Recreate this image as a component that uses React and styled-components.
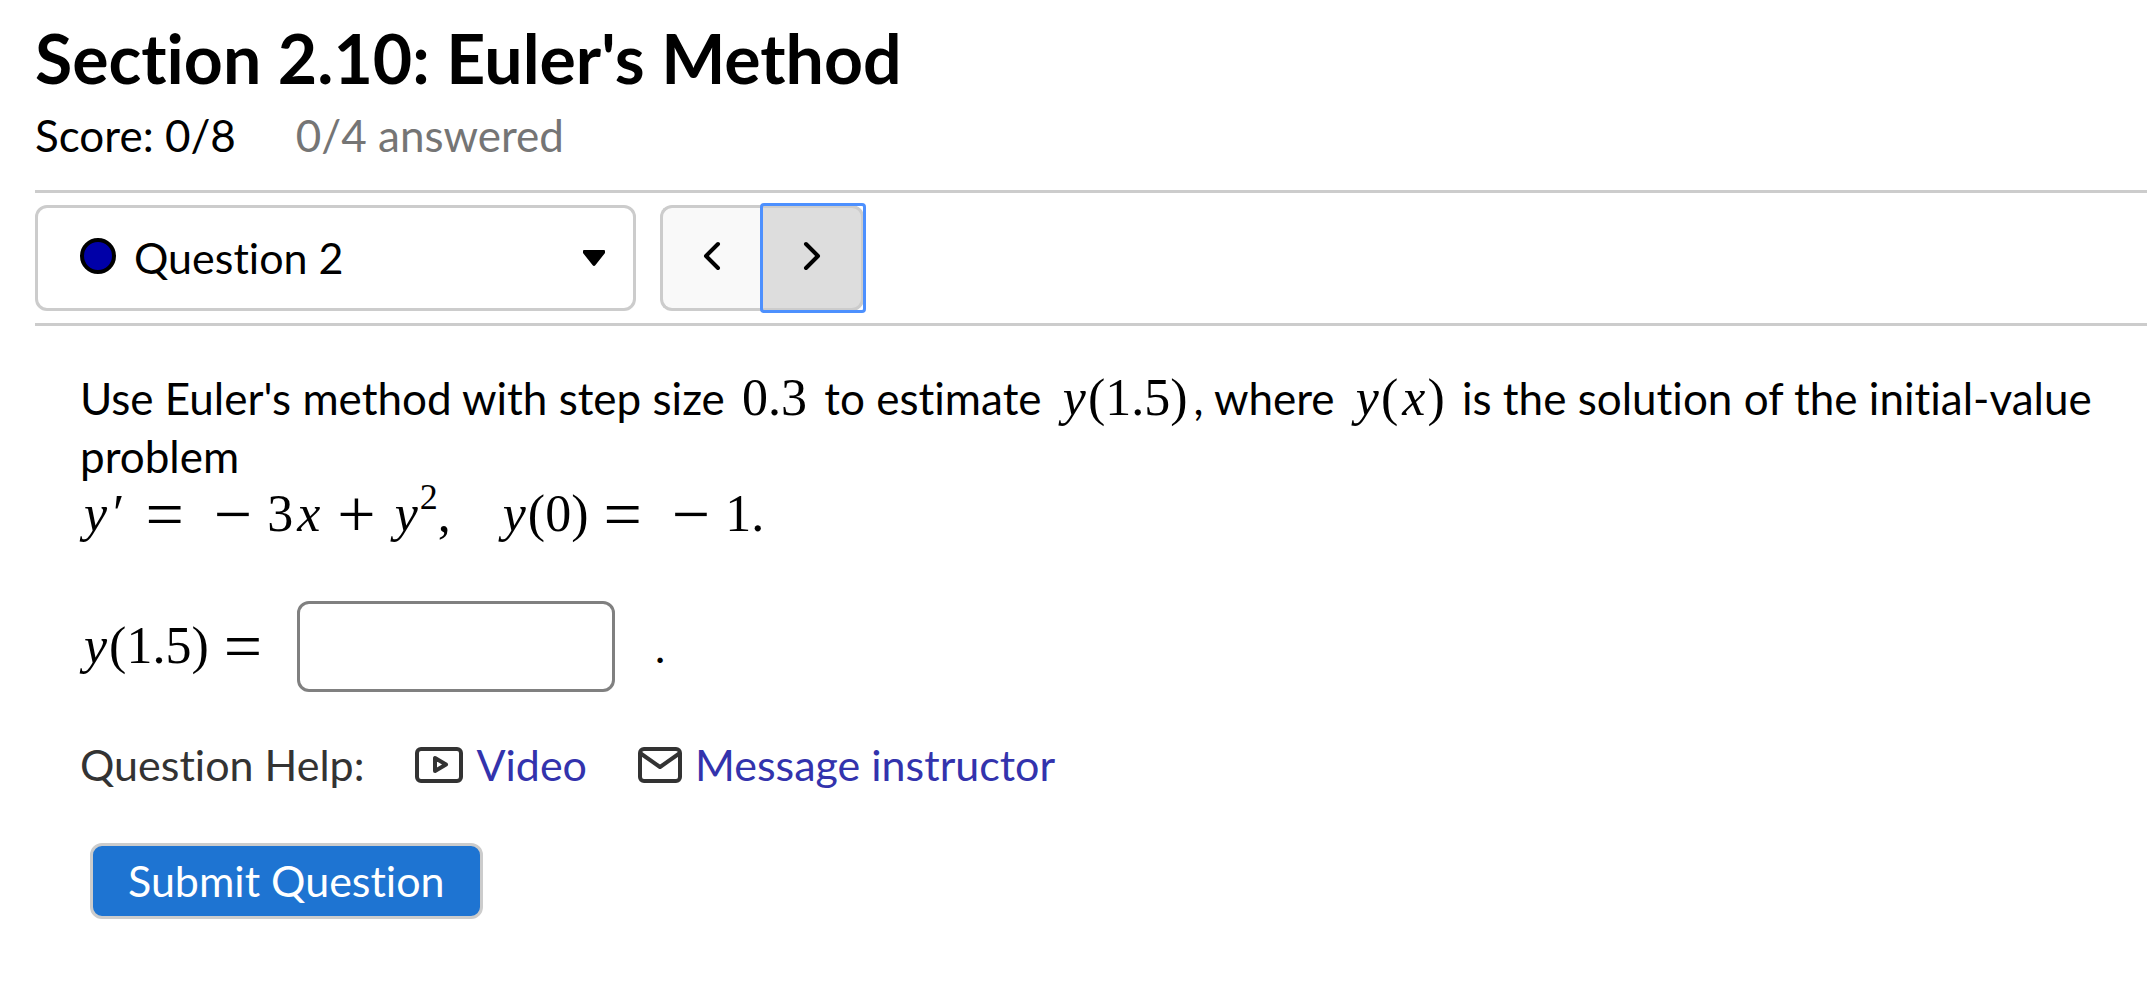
import React, { useState } from 'react';
import styled, { createGlobalStyle } from 'styled-components';

const GlobalStyle = createGlobalStyle`
  * {
    box-sizing: border-box;
  }

  body {
    margin: 0;
    background: #fff;
    color: #000;
    font-family: "Trebuchet MS", Lato, sans-serif;
    font-size: 43px;
    line-height: 58px;
    font-variant-ligatures: none;
  }
`;

const Page = styled.main`
  padding: 22px 0 60px 35px;
`;

const Title = styled.h1`
  margin: 0;
  font-size: 68px;
  line-height: 72px;
  font-weight: 700;
`;

const ScoreLine = styled.div`
  display: flex;
  gap: 60px;
  padding: 12px 0 26px;
  font-size: 44px;
`;

const Answered = styled.span`
  color: #757575;
`;

const Toolbar = styled.nav`
  display: flex;
  gap: 24px;
  padding: 12px 0;
  border-top: 3px solid #ccc;
  border-bottom: 3px solid #ccc;
`;

const Picker = styled.label`
  display: flex;
  align-items: center;
  gap: 18px;
  width: 601px;
  height: 106px;
  padding: 0 28px 0 42px;
  border: 3px solid #ccc;
  border-radius: 12px;
`;

const Dot = styled.span`
  width: 36px;
  height: 36px;
  margin-bottom: 4px;
  border: 4px solid #000;
  border-radius: 50%;
  background: #0000a8;
`;

const QuestionSelect = styled.select`
  flex: 1;
  appearance: none;
  padding: 0;
  border: 0;
  background: none;
  color: inherit;
  font: inherit;
`;

const Pager = styled.div`
  display: flex;
`;

const PagerButton = styled.button`
  position: relative;
  display: flex;
  align-items: center;
  justify-content: center;
  width: ${props => (props.$active ? '104px' : '100px')};
  height: 106px;
  padding: 0 0 4px;
  border: 3px solid #ccc;
  border-right-width: ${props => (props.$active ? '3px' : '0')};
  border-radius: ${props => (props.$active ? '0 12px 12px 0' : '12px 0 0 12px')};
  background: ${props => (props.$active ? '#ddd' : '#f9f9f9')};
  color: #000;
  outline: none;

  /* focus ring, squarer than the button under it */
  &::after {
    content: "";
    display: ${props => (props.$active ? 'block' : 'none')};
    position: absolute;
    inset: -5px -5px -5px -3px;
    border: 3px solid #4d90fe;
    border-radius: 4px;
  }
`;

const Question = styled.section`
  padding: 43px 40px 0 45px;
`;

const Text = styled.p`
  margin: 0;
  font-size: 44px;
`;

const MathText = styled.span`
  display: inline-flex;
  align-items: center;
  height: 58px;
  font-family: "Liberation Serif", serif;
  font-size: 52px;
  vertical-align: baseline;
  white-space: nowrap;
`;

const InlineMath = styled(MathText)`
  margin: 0 6px;
`;

const Equation = styled.div`
  display: flex;
`;

const Var = styled.i`
  margin: 0 2px 0 4px;
`;

const Prime = styled.span`
  margin: 0 6px 0 4px;
`;

const Operator = styled.span`
  margin: 0 15px;
  font-size: 68px;
`;

const Power = styled.sup`
  align-self: flex-start;
  font-size: 36px;
  line-height: 24px;
`;

const Second = styled.span`
  margin-left: 48px;
`;

const AnswerRow = styled.div`
  display: flex;
  align-items: center;
  gap: 20px;
  margin-top: 58px;
`;

const AnswerInput = styled.input`
  width: 318px;
  height: 91px;
  padding: 0 16px;
  border: 3px solid #808080;
  border-radius: 12px;
  background: #fff;
  font: inherit;
`;

const Period = styled.span`
  margin-left: 20px;
`;

const Help = styled.div`
  display: flex;
  flex-wrap: wrap;
  align-items: center;
  gap: 51px;
  margin-top: 44px;
  color: #333;
`;

const HelpItem = styled.span`
  display: flex;
  align-items: center;
  gap: 13px;
`;

const HelpLink = styled.a`
  color: #3333ad;
  text-decoration: none;
`;

const SubmitButton = styled.button`
  display: block;
  margin: 49px 0 0 10px;
  padding: 6px 35px;
  border: 3px solid #ccc;
  border-radius: 12px;
  background: #1e74d2;
  color: #fff;
  font: inherit;
`;

const CaretIcon = () => (
  <svg width="22" height="16" viewBox="0 0 22 16" aria-hidden="true">
    <path d="M1 0h20q1 0 1 1v2l-9.500 12q-1.500 2-3 0L0 3V1q0-1 1-1z" />
  </svg>
);

const ChevronIcon = ({ next }) => (
  <svg width="18" height="30" viewBox="0 0 18 30" fill="none" stroke="currentColor" strokeWidth="4" strokeLinecap="round" strokeLinejoin="round" aria-hidden="true">
    <path d={next ? 'M3 3l12 12L3 27' : 'M15 3L3 15l12 12'} />
  </svg>
);

const VideoIcon = () => (
  <svg width="48" height="36" viewBox="0 0 48 36" fill="none" stroke="#333" strokeWidth="4" strokeLinejoin="round" aria-hidden="true">
    <rect x="2" y="2" width="44" height="32" rx="4" />
    <path d="M20 11v13l11-6.500z" />
  </svg>
);

const MailIcon = () => (
  <svg width="44" height="36" viewBox="0 0 44 36" fill="none" stroke="#333" strokeWidth="4" strokeLinejoin="round" aria-hidden="true">
    <rect x="2" y="2" width="40" height="32" rx="4" />
    <path d="M2 6l20 14L42 6" />
  </svg>
);

export default function App() {
  const [question, setQuestion] = useState('2');
  const [answer, setAnswer] = useState('');

  const move = step => {
    const next = Number(question) + step;
    if (next >= 1 && next <= 4) {
      setQuestion(String(next));
    }
  };

  return (
    <>
      <GlobalStyle />
      <Page>
        <Title>Section 2.10: Euler's Method</Title>
        <ScoreLine>
          <span>Score: 0/8</span>
          <Answered>0/4 answered</Answered>
        </ScoreLine>

        <Toolbar>
          <Picker>
            <Dot />
            <QuestionSelect aria-label="Question" value={question} onChange={e => setQuestion(e.target.value)}>
              <option value="1">Question 1</option>
              <option value="2">Question 2</option>
              <option value="3">Question 3</option>
              <option value="4">Question 4</option>
            </QuestionSelect>
            <CaretIcon />
          </Picker>
          <Pager>
            <PagerButton type="button" aria-label="Previous question" onClick={() => move(-1)}>
              <ChevronIcon />
            </PagerButton>
            <PagerButton type="button" aria-label="Next question" $active onClick={() => move(1)}>
              <ChevronIcon next />
            </PagerButton>
          </Pager>
        </Toolbar>

        <Question>
          <Text>
            Use Euler's method with step size <InlineMath>0.3</InlineMath> to estimate{' '}
            <InlineMath><Var>y</Var>(1.5)</InlineMath>, where <InlineMath><Var>y</Var>(<Var>x</Var>)</InlineMath> is
            the solution of the initial-value problem
          </Text>
          <Equation>
            <MathText>
              <Var>y</Var><Prime>′</Prime><Operator>=</Operator><Operator>−</Operator>3<Var>x</Var>
              <Operator>+</Operator><Var>y</Var><Power>2</Power>,
              <Second><Var>y</Var>(0)</Second><Operator>=</Operator><Operator>−</Operator>1.
            </MathText>
          </Equation>

          <AnswerRow>
            <label htmlFor="answer">
              <MathText><Var>y</Var>(1.5)<Operator>=</Operator></MathText>
            </label>
            <AnswerInput id="answer" type="text" autoComplete="off" value={answer} onChange={e => setAnswer(e.target.value)} />
            <Period>.</Period>
          </AnswerRow>

          <Help>
            <span>Question Help:</span>
            <HelpItem>
              <VideoIcon />
              <HelpLink href="#video">Video</HelpLink>
            </HelpItem>
            <HelpItem>
              <MailIcon />
              <HelpLink href="#message">Message instructor</HelpLink>
            </HelpItem>
          </Help>

          <SubmitButton type="button">Submit Question</SubmitButton>
        </Question>
      </Page>
    </>
  );
}
